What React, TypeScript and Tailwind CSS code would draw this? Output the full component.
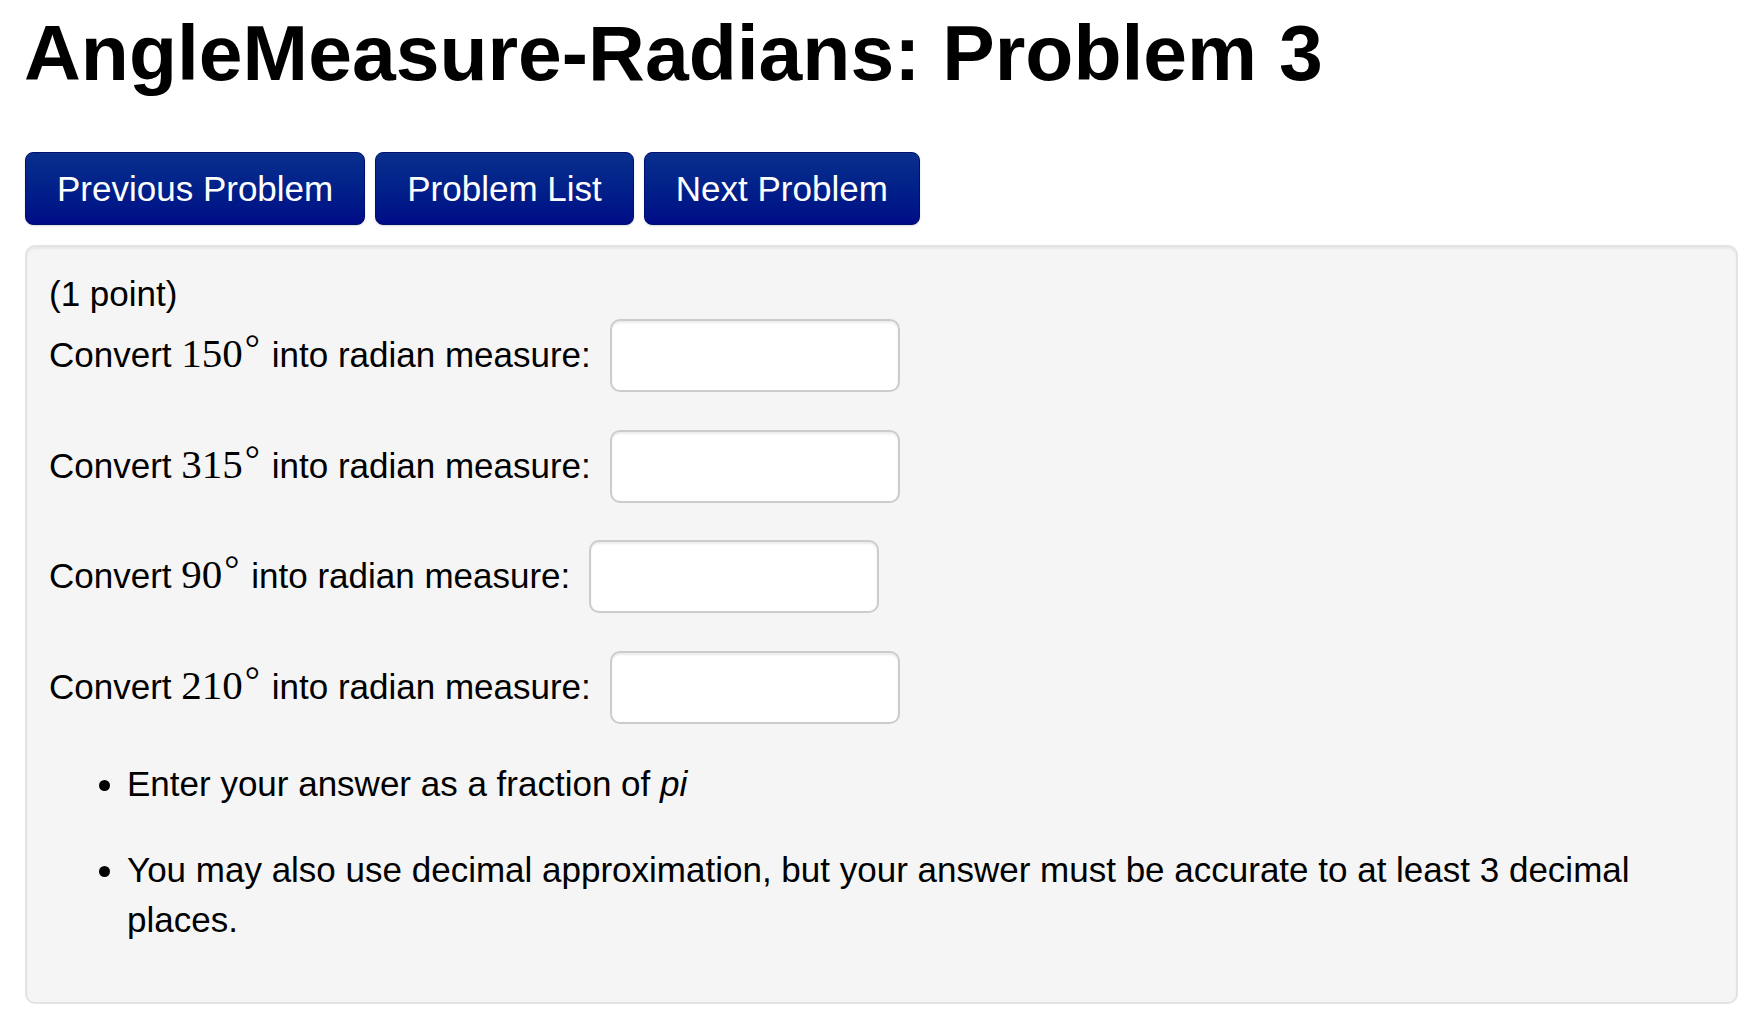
import React from "react";

const rows = [
  { deg: "150" },
  { deg: "315" },
  { deg: "90" },
  { deg: "210" },
];

function Row({ deg }: { deg: string }) {
  return (
    <div className="flex items-center h-[73px]">
      <span className="pb-[3px] leading-[50px] whitespace-nowrap">
        Convert{" "}
        <span className="text-[41px] font-['Liberation_Serif',serif]">{deg}</span>
        <span className="text-[38px] leading-none font-['Liberation_Serif',serif] align-[6px] ml-[2px] mr-[2px]">°</span>{" "}
        into radian measure:
      </span>
      <input
        type="text"
        className="ml-[19px] w-[290px] h-[73px] bg-white border-2 border-[#cccccc] rounded-[10px] shadow-[inset_0_2px_2px_rgba(0,0,0,0.075)] outline-none"
      />
    </div>
  );
}

export default function App() {
  return (
    <div className="min-h-[1024px] bg-white text-black font-['Liberation_Sans',Arial,sans-serif] px-[24px]">
      <h1 className="pt-[9px] text-[78.7px] leading-[88px] font-bold tracking-normal">
        AngleMeasure-Radians: Problem 3
      </h1>
      <div className="mt-[55px] flex gap-[10px] pl-[1px]">
        {["Previous Problem", "Problem List", "Next Problem"].map((t) => (
          <button
            key={t}
            className="h-[73px] px-[31px] rounded-[8px] text-white text-[35px] leading-none bg-gradient-to-b from-[#0a2f8d] to-[#000a86] border border-[#001070] shadow-[0_1px_2px_rgba(0,0,0,0.15)]"
          >
            {t}
          </button>
        ))}
      </div>
      <div className="mt-[20px] ml-[1px] w-[1713px] h-[759px] bg-[#f5f5f5] border-2 border-[#e3e3e3] rounded-[10px] shadow-[inset_0_2px_2px_rgba(0,0,0,0.05)] pt-[22px] px-[22px] text-[35px] leading-[50px]">
        <div className="h-[50px]">(1 point)</div>
        <div className="flex flex-col gap-[37.7px]">
          {rows.map((r) => (
            <Row key={r.deg} deg={r.deg} />
          ))}
        </div>
        <ul className="mt-[35px] pl-[78px] list-disc flex flex-col gap-[36px]">
          <li>
            Enter your answer as a fraction of <i>pi</i>
          </li>
          <li>
            You may also use decimal approximation, but your answer must be accurate to at least 3 decimal places.
          </li>
        </ul>
      </div>
    </div>
  );
}
